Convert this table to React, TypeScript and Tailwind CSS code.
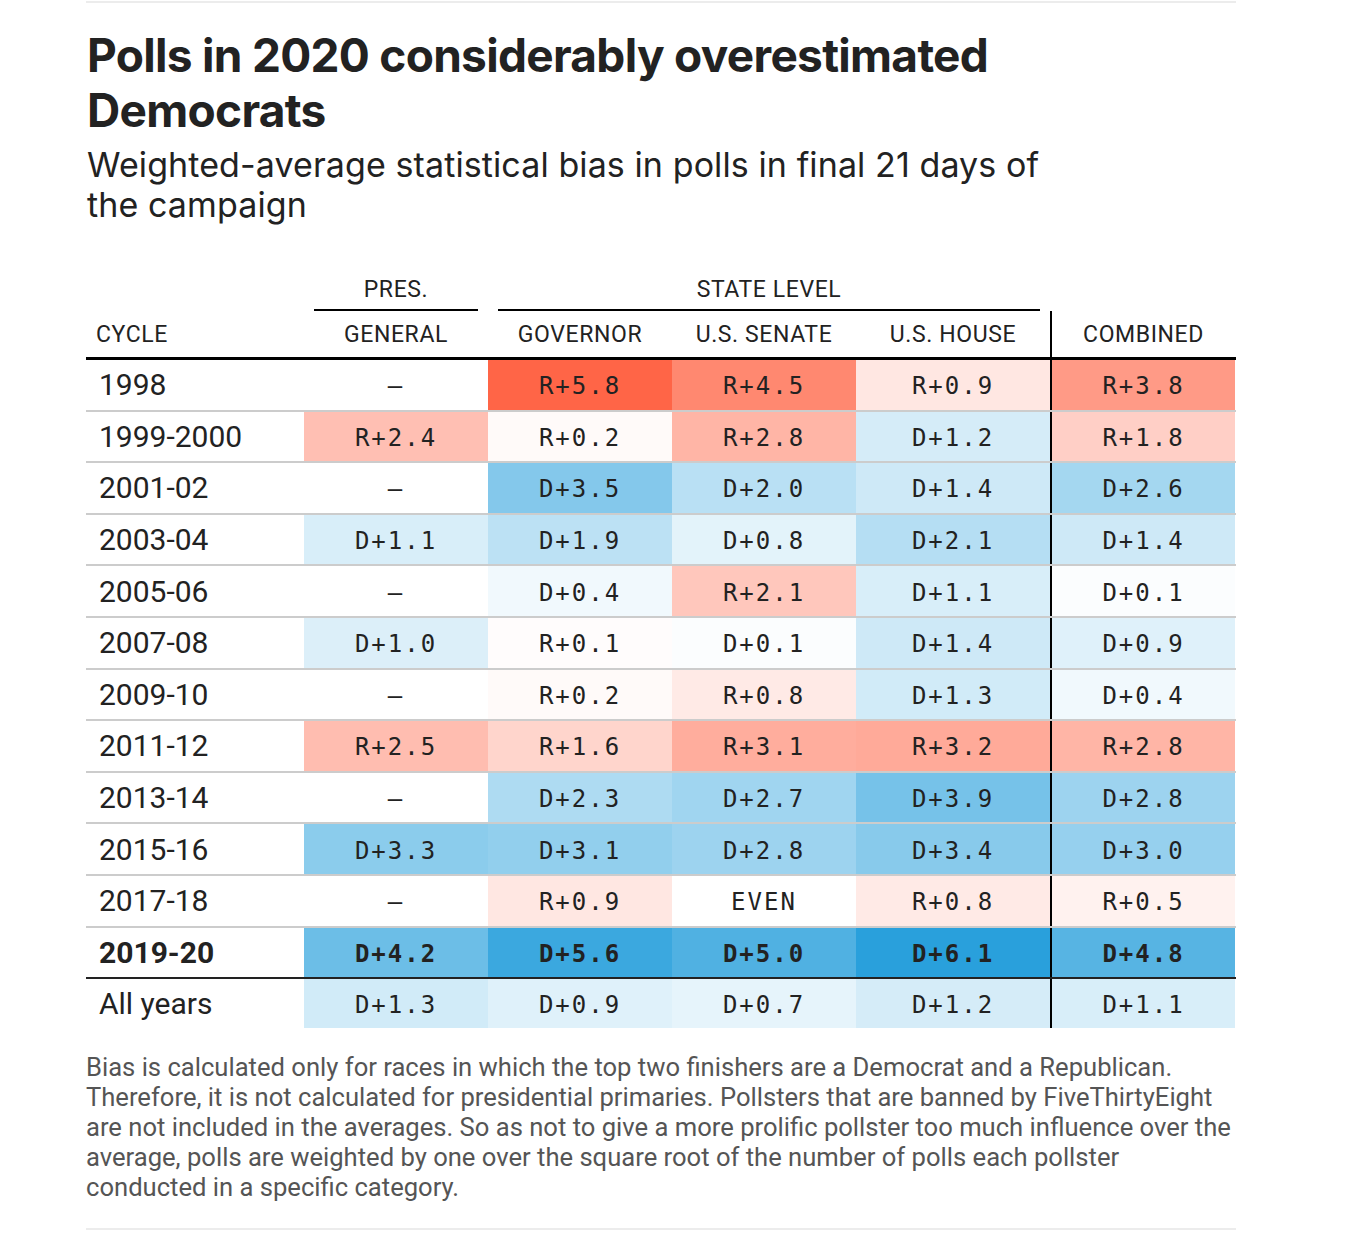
import React from "react";

type Row = { cycle: string; vals: (string | null)[]; bold?: boolean; last?: boolean };

const rows: Row[] = [
  { cycle: "1998", vals: [null, "R+5.8", "R+4.5", "R+0.9", "R+3.8"] },
  { cycle: "1999-2000", vals: ["R+2.4", "R+0.2", "R+2.8", "D+1.2", "R+1.8"] },
  { cycle: "2001-02", vals: [null, "D+3.5", "D+2.0", "D+1.4", "D+2.6"] },
  { cycle: "2003-04", vals: ["D+1.1", "D+1.9", "D+0.8", "D+2.1", "D+1.4"] },
  { cycle: "2005-06", vals: [null, "D+0.4", "R+2.1", "D+1.1", "D+0.1"] },
  { cycle: "2007-08", vals: ["D+1.0", "R+0.1", "D+0.1", "D+1.4", "D+0.9"] },
  { cycle: "2009-10", vals: [null, "R+0.2", "R+0.8", "D+1.3", "D+0.4"] },
  { cycle: "2011-12", vals: ["R+2.5", "R+1.6", "R+3.1", "R+3.2", "R+2.8"] },
  { cycle: "2013-14", vals: [null, "D+2.3", "D+2.7", "D+3.9", "D+2.8"] },
  { cycle: "2015-16", vals: ["D+3.3", "D+3.1", "D+2.8", "D+3.4", "D+3.0"] },
  { cycle: "2017-18", vals: [null, "R+0.9", "EVEN", "R+0.8", "R+0.5"] },
  { cycle: "2019-20", vals: ["D+4.2", "D+5.6", "D+5.0", "D+6.1", "D+4.8"], bold: true },
  { cycle: "All years", vals: ["D+1.3", "D+0.9", "D+0.7", "D+1.2", "D+1.1"], last: true },
];

// cell shade: white -> red / blue, linear on the bias value
function shade(v: string | null) {
  if (!v || v === "EVEN") return "#ffffff";
  const n = parseFloat(v.slice(2));
  const [to, max] = v[0] === "R" ? [[255, 101, 71], 5.8] : [[41, 160, 220], 6.1];
  const t = Math.min(n / max, 1);
  const c = to.map((x) => Math.round(255 + (x - 255) * t));
  return `rgb(${c[0]},${c[1]},${c[2]})`;
}

const cols = "grid grid-cols-[218px_184px_184px_184px_194px_185px]";

const notes = [
  "Bias is calculated only for races in which the top two finishers are a Democrat and a Republican.",
  "Therefore, it is not calculated for presidential primaries. Pollsters that are banned by FiveThirtyEight",
  "are not included in the averages. So as not to give a more prolific pollster too much influence over the",
  "average, polls are weighted by one over the square root of the number of polls each pollster",
  "conducted in a specific category.",
];

export default function App() {
  return (
    <div className="bg-white min-h-[1258px] pt-[1px]">
      <div className="ml-[86px] w-[1150px] border-t-2 border-[#ececec] font-['Inter',sans-serif] text-[#222]">
        <div className="pl-[1px] pt-[25px]">
          <h1 className="text-[46px] leading-[55px] font-bold tracking-[-0.7px]">
            Polls in 2020 considerably overestimated
            <br />
            Democrats
          </h1>
          <p className="text-[34px] leading-[40px] mt-[7px] tracking-[0.1px]">
            Weighted-average statistical bias in polls in final 21 days of
            <br />
            the campaign
          </p>
        </div>

        <div className="mt-[46px] font-['Roboto',sans-serif]">
          <div className={cols + " h-[40px] text-[23px] tracking-[0.6px]"}>
            <div />
            <div className="mx-[10px] border-b-2 border-black flex items-center justify-center">PRES.</div>
            <div className="col-span-3 mx-[10px] border-b-2 border-black flex items-center justify-center">
              STATE LEVEL
            </div>
            <div />
          </div>
          <div className={cols + " h-[49px] text-[23px] tracking-[0.6px] border-b-[3px] border-black"}>
            <div className="flex items-center pl-[10px] pt-[2px]">CYCLE</div>
            <div className="flex items-center justify-center pt-[2px]">GENERAL</div>
            <div className="flex items-center justify-center pt-[2px]">GOVERNOR</div>
            <div className="flex items-center justify-center pt-[2px]">U.S. SENATE</div>
            <div className="flex items-center justify-center pt-[2px]">U.S. HOUSE</div>
            <div className="flex items-center justify-center pt-[2px] border-l-2 border-black">COMBINED</div>
          </div>

          {rows.map((r) => (
            <div
              key={r.cycle}
              className={
                cols +
                (r.last
                  ? " h-[49px]"
                  : r.bold
                  ? " h-[51.6px] border-b-2 border-[#222]"
                  : " h-[51.6px] border-b-2 border-black/20")
              }
            >
              <div className={"flex items-center pl-[13px] text-[30px] " + (r.bold ? "font-bold" : "")}>
                {r.cycle}
              </div>
              {r.vals.map((v, i) => (
                <div
                  key={i}
                  style={{ backgroundColor: shade(v) }}
                  className={
                    "flex items-center justify-center pt-[3px] font-['DejaVu_Sans_Mono',monospace] text-[24px] tracking-[2px] " +
                    (r.bold ? "font-bold " : "") +
                    (i === 4 ? "border-l-2 border-black" : "")
                  }
                >
                  {v ?? "–"}
                </div>
              ))}
            </div>
          ))}
        </div>

        <div className="mt-[24px] text-[25.6px] leading-[30px] text-[#555] font-['Roboto',sans-serif]">
          {notes.map((l) => (
            <div key={l} className="whitespace-nowrap">
              {l}
            </div>
          ))}
        </div>
        <div className="mt-[26px] border-t-2 border-[#ececec]" />
      </div>
    </div>
  );
}
